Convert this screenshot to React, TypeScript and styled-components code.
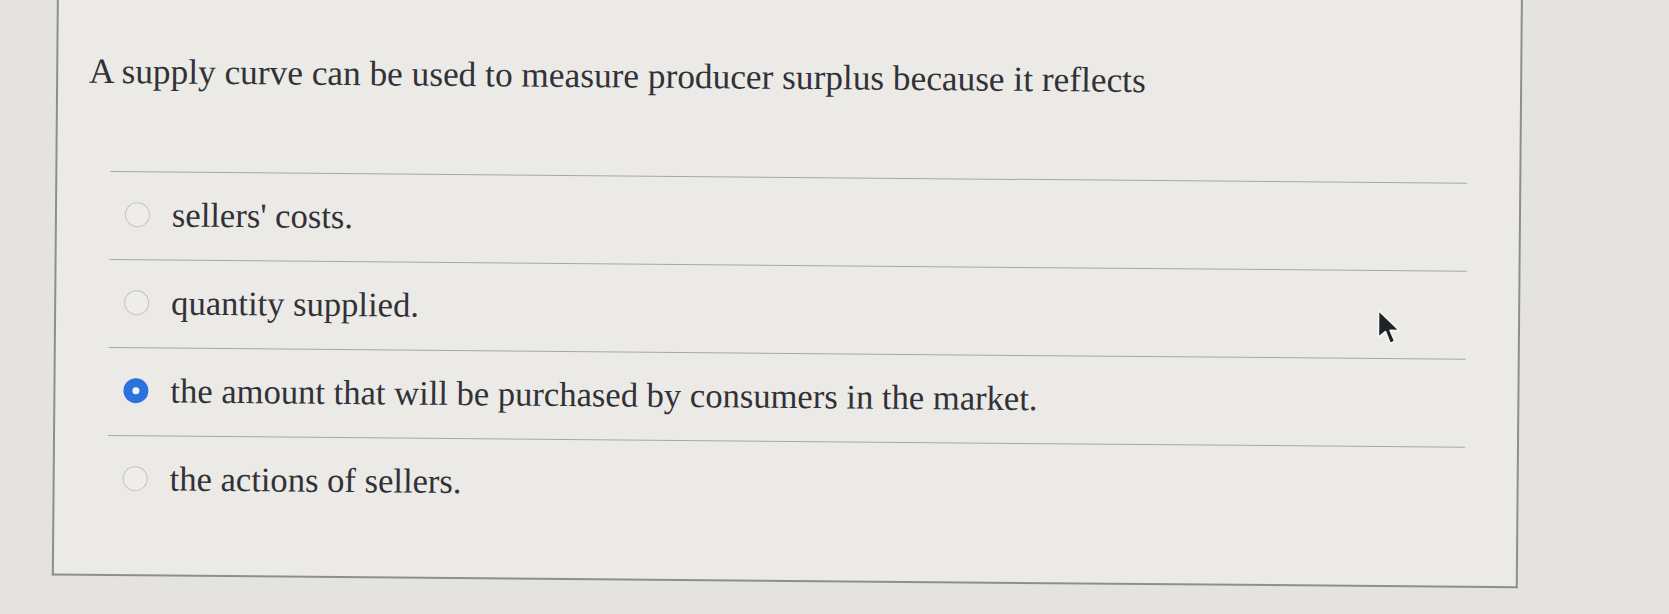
import styled, { createGlobalStyle } from "styled-components";

const GlobalStyle = createGlobalStyle`
  html, body {
    margin: 0;
    padding: 0;
    background: #e4e3df;
  }
  body {
    font-family: "Liberation Serif", "Times New Roman", serif;
    overflow: hidden;
  }
`;

// the reference is a photo of a screen, tilted about half a degree;
// the sheet is lifted 20px so its top edge stays out of frame
const Page = styled.div`
  width: 1669px;
  height: 634px;
  background: #e4e3df;
  position: relative;
  transform: translateY(-20px) rotate(0.5deg);
  transform-origin: 0 0;
`;

const Panel = styled.div`
  margin-left: 57px;
  width: 1466px;
  height: 595px;
  box-sizing: border-box;
  background: #ebeae6;
  border: 2px solid #8e8e8f;
  border-top: none;
  padding: 71px 0 0 31px;
`;

const Question = styled.p`
  margin: 0 0 79px;
  font-size: 35.3px;
  line-height: 40px;
  color: #323137;
`;

const Options = styled.div`
  margin-left: 22px;
  width: 1357px;
  display: flex;
  flex-direction: column;
`;

const Row = styled.label`
  display: flex;
  align-items: flex-start;
  gap: 22px;
  height: 88px;
  box-sizing: border-box;
  padding: 22px 0 26px 15px;
  border-top: 1.5px solid #a7a7a8;
`;

const Radio = styled.span<{ $checked?: boolean }>`
  flex: none;
  width: 25px;
  height: 25px;
  margin-top: 8px;
  box-sizing: border-box;
  border-radius: 50%;
  background: ${p => (p.$checked ? "#f4f6fb" : "#eeede9")};
  border: ${p => (p.$checked ? "9px solid #2c72de" : "1.5px solid #c3c2c0")};
`;

const OptionText = styled.span`
  font-size: 34.6px;
  line-height: 40px;
  color: #323137;
`;

const Cursor = styled.svg`
  position: absolute;
  left: 1379px;
  top: 317px;
  width: 26px;
  height: 38px;
`;

const options = [
  "sellers' costs.",
  "quantity supplied.",
  "the amount that will be purchased by consumers in the market.",
  "the actions of sellers.",
];

const App = () => {
  const selected = 2;
  return (
    <>
      <GlobalStyle />
      <Page>
        <Panel>
          <Question>
            A supply curve can be used to measure producer surplus because it reflects
          </Question>
          <Options>
            {options.map((text, i) => (
              <Row key={text}>
                <Radio $checked={i === selected} />
                <OptionText>{text}</OptionText>
              </Row>
            ))}
          </Options>
        </Panel>
        <Cursor viewBox="0 0 22 32">
          <path
            d="M2 1 L2 24 L8 19 L12 29 L16 27 L12 18 L20 18 Z"
            fill="#1f2226"
            stroke="#f4f4f4"
            strokeWidth="1.5"
            strokeLinejoin="round"
          />
        </Cursor>
      </Page>
    </>
  );
};

export default App;
